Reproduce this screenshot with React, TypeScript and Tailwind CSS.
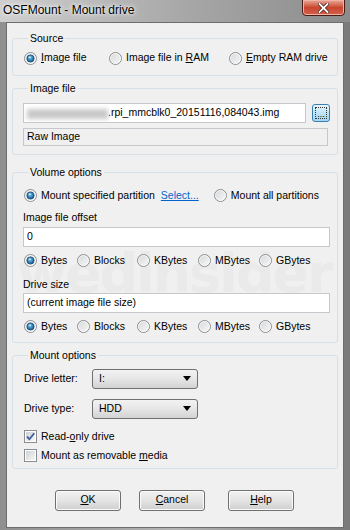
import React from "react";

const Radio = ({ checked }: { checked?: boolean }) => (
  <svg width="13" height="13" viewBox="0 0 13 13" className="shrink-0">
    <circle cx="6.5" cy="6.5" r="6" fill="url(#radioFill)" stroke="#8b8d8f" />
    <circle cx="6.5" cy="6.5" r="5" fill="none" stroke="#ffffff" strokeOpacity="0.6" />
    {checked && (
      <>
        <circle cx="6.5" cy="6.5" r="3.6" fill="url(#radioDot)" stroke="#1b4a73" strokeWidth="0.8" />
        <ellipse cx="5.8" cy="5.3" rx="1.4" ry="1" fill="#ffffff" fillOpacity="0.55" />
      </>
    )}
  </svg>
);

const Check = ({ checked }: { checked?: boolean }) => (
  <svg width="13" height="13" viewBox="0 0 13 13" className="shrink-0">
    <rect x="0.5" y="0.5" width="12" height="12" fill="#ffffff" stroke="#8b8d8f" />
    <rect x="2" y="2" width="9" height="9" fill="url(#checkFill)" />
    {checked && (
      <path d="M3 6.6 L5.4 9.2 L10.2 3.2" fill="none" stroke="#3f5a9a" strokeWidth="1.8" />
    )}
  </svg>
);

const Opt = ({ checked, children, w }: { checked?: boolean; children: React.ReactNode; w?: string }) => (
  <div className={`flex items-center gap-[4px] h-[14px] ${w ?? ""}`}>
    <Radio checked={checked} />
    <span className="whitespace-nowrap">{children}</span>
  </div>
);

const Group = ({ title, className, children }: { title: string; className?: string; children: React.ReactNode }) => (
  <fieldset className={`border border-[#d5dfe5] rounded-[3px] mx-[5px] pl-[10px] pr-[7px] ${className ?? ""}`}>
    <legend className="ml-[5px] px-[2px] leading-[13px]">{title}</legend>
    {children}
  </fieldset>
);

const Combo = ({ value }: { value: string }) => (
  <div className="w-[106px] h-[20px] rounded-[3px] border border-[#707070] bg-gradient-to-b from-[#f2f2f2] via-[#e6e6e6] to-[#d2d2d2] flex items-center justify-between pl-[6px] pr-[6px]">
    <span>{value}</span>
    <svg width="8" height="5" viewBox="0 0 8 5">
      <path d="M0 0 H8 L4 5 Z" fill="#000" />
    </svg>
  </div>
);

const Btn = ({ children, className }: { children: React.ReactNode; className?: string }) => (
  <div className={`w-[66px] h-[21px] rounded-[3px] border border-[#707070] bg-gradient-to-b from-[#f2f2f2] via-[#e4e4e4] to-[#cfcfcf] flex items-center justify-center shadow-[inset_0_0_0_1px_#fbfbfb] ${className ?? ""}`}>
    {children}
  </div>
);

const UnitRow = ({ className }: { className?: string }) => (
  <div className={`flex items-center ml-[1px] ${className ?? ""}`}>
    <Opt checked w="w-[53px]">Bytes</Opt>
    <Opt w="w-[60px]">Blocks</Opt>
    <Opt w="w-[61px]">KBytes</Opt>
    <Opt w="w-[61px]">MBytes</Opt>
    <Opt>GBytes</Opt>
  </div>
);

export default function App() {
  return (
    <div className="w-[350px] h-[530px] flex flex-col bg-gradient-to-r from-[#8f8f8f] via-[#b4b4b4] to-[#7a7a7a] font-['Liberation_Sans',Arial,sans-serif] text-[10.5px] text-black overflow-hidden">
      <svg width="0" height="0" className="absolute">
        <defs>
          <linearGradient id="radioFill" x1="0" y1="0" x2="1" y2="1">
            <stop offset="0" stopColor="#d4d6d8" />
            <stop offset="1" stopColor="#fafafa" />
          </linearGradient>
          <radialGradient id="radioDot" cx="0.45" cy="0.4" r="0.7">
            <stop offset="0" stopColor="#6fc6f0" />
            <stop offset="0.6" stopColor="#2a77ad" />
            <stop offset="1" stopColor="#0f3e66" />
          </radialGradient>
          <linearGradient id="checkFill" x1="0" y1="0" x2="1" y2="1">
            <stop offset="0" stopColor="#cdd1d6" />
            <stop offset="1" stopColor="#f7f7f7" />
          </linearGradient>
        </defs>
      </svg>

      {/* title bar */}
      <div className="h-[22px] shrink-0 flex items-start justify-between bg-gradient-to-r from-[#cfcfcf] via-[#a9a9a9] to-[#8c8c8c]">
        <span className="text-[12px] leading-[12px] mt-[4px] ml-[3px] text-black [text-shadow:0_0_6px_#fff,0_0_3px_#fff]">
          OSFMount - Mount drive
        </span>
        <div className="w-[43px] h-[17px] mr-[5px] -mt-[1px] rounded-b-[4px] border border-[#4a1a14] bg-gradient-to-b from-[#e9a99a] via-[#c9462f] to-[#d2604a] flex items-center justify-center shadow-[inset_0_0_0_1px_#f0b3a6]">
          <svg width="11" height="10" viewBox="0 0 11 10">
            <path d="M1.5 1 L9.5 9 M9.5 1 L1.5 9" stroke="#3a1610" strokeWidth="3.2" strokeLinecap="square" />
            <path d="M1.5 1 L9.5 9 M9.5 1 L1.5 9" stroke="#ffffff" strokeWidth="1.8" strokeLinecap="square" />
          </svg>
        </div>
      </div>

      {/* client area */}
      <div className="relative flex-1 mx-[6px] mb-[2px] bg-[#f0f0f0] border border-[#6d6d6d] pt-[9px] overflow-hidden">
        <div className="absolute left-[10px] top-[224px] text-[54px] leading-[54px] font-['DejaVu_Sans',sans-serif] font-bold tracking-[-2px] text-[#eaeaea] pointer-events-none select-none">
          wedinsider
        </div>

        <div className="relative">
          <Group title="Source" className="pb-[10px]">
            <div className="flex items-center mt-[6px] ml-[1px]">
              <Opt checked w="w-[85px]"><u>I</u>mage file</Opt>
              <Opt w="w-[120px]">Image file in <u>R</u>AM</Opt>
              <Opt><u>E</u>mpty RAM drive</Opt>
            </div>
          </Group>

          <Group title="Image file" className="mt-[6px] pb-[8px] pr-[6px]">
            <div className="flex items-center mt-[8px] gap-[6px]">
              <div className="flex-1 min-w-0 h-[20px] bg-white border border-[#c5c8cc] flex items-center pl-[3px] overflow-hidden whitespace-nowrap">
                <span className="w-[81px] shrink-0 h-[10px] mt-[1px] bg-[#c9c9c9] blur-[2px]" />
                <span>.rpi_mmcblk0_20151116,084043.img</span>
              </div>
              <div className="w-[18px] h-[18px] shrink-0 rounded-[3px] border border-[#3c7fb1] bg-gradient-to-b from-[#eaf6fd] via-[#bfe4f8] to-[#9fd5f3] flex items-center justify-center">
                <div className="w-[12px] h-[12px] border border-dotted border-[#333] flex items-end justify-center text-[9px] leading-[8px]">...</div>
              </div>
            </div>
            <div className="mt-[5px] mr-[2px] h-[18px] border border-[#c5c8cc] bg-[#f0f0f0] flex items-center pl-[3px]">
              Raw Image
            </div>
          </Group>

          <Group title="Volume options" className="mt-[11px] pb-[8px]">
            <div className="flex items-center mt-[9px] ml-[1px]">
              <Opt checked>Mount specified partition</Opt>
              <span className="ml-[6px] w-[53px] text-[#0066cc] underline">Select...</span>
              <Opt>Mount all partitions</Opt>
            </div>
            <div className="mt-[7px] leading-[13px]">Image file offset</div>
            <div className="mt-[3px] h-[20px] bg-white border border-[#c5c8cc] flex items-center pl-[3px]">0</div>
            <UnitRow className="mt-[7px]" />
            <div className="mt-[10px] leading-[13px]">Drive size</div>
            <div className="mt-[2px] h-[20px] bg-white border border-[#c5c8cc] flex items-center pl-[3px]">(current image file size)</div>
            <UnitRow className="mt-[7px]" />
          </Group>

          <Group title="Mount options" className="mt-[6px] pb-[5px]">
            <div className="flex items-center mt-[7px]">
              <span className="w-[68px] ml-[1px]">Drive letter:</span>
              <Combo value="I:" />
            </div>
            <div className="flex items-center mt-[10px]">
              <span className="w-[68px] ml-[1px]">Drive type:</span>
              <Combo value="HDD" />
            </div>
            <div className="flex items-center gap-[4px] mt-[11px] h-[14px] ml-[1px]">
              <Check checked />
              <span>Read-<u>o</u>nly drive</span>
            </div>
            <div className="flex items-center gap-[4px] mt-[5px] h-[14px] ml-[1px]">
              <Check />
              <span>Mount as removable <u>m</u>edia</span>
            </div>
          </Group>

          <div className="flex mt-[21px] pl-[48px]">
            <Btn><u>O</u>K</Btn>
            <Btn className="ml-[18px]"><u>C</u>ancel</Btn>
            <Btn className="ml-[23px]"><u>H</u>elp</Btn>
          </div>
        </div>
      </div>
    </div>
  );
}
